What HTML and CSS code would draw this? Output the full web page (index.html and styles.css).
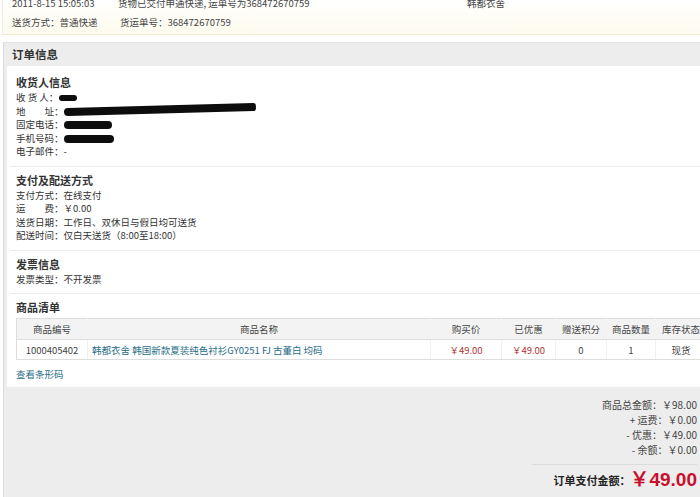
FILE: index.html
```html
<!DOCTYPE html>
<html lang="zh-CN">
<head>
<meta charset="utf-8">
<title>订单信息</title>
<link rel="stylesheet" href="styles.css">
</head>
<body>
<div class="page">
  <div class="track">
    <div class="track-row first">
      <span class="c1">2011-8-15 15:05:03</span>
      <span class="c2">货物已交付申通快递, 运单号为368472670759</span>
      <span class="c3">韩都衣舍</span>
    </div>
    <div class="track-row">
      <span class="c1">送货方式：普通快递</span>
      <span class="c2 shift">货运单号：368472670759</span>
    </div>
  </div>

  <div class="order">
    <div class="order-head">订单信息</div>
    <div class="order-body">
      <div class="section s-first">
        <div class="sec-title">收货人信息</div>
        <div class="rows">
          <div class="row">收 货 人：<span class="blot b-name"></span></div>
          <div class="row">地　　址：<span class="blot b-addr"></span></div>
          <div class="row">固定电话：<span class="blot b-tel"></span></div>
          <div class="row">手机号码：<span class="blot b-mob"></span></div>
          <div class="row">电子邮件：-</div>
        </div>
      </div>
      <div class="section">
        <div class="sec-title">支付及配送方式</div>
        <div class="rows">
          <div class="row">支付方式：在线支付</div>
          <div class="row">运　　费：￥0.00</div>
          <div class="row">送货日期：工作日、双休日与假日均可送货</div>
          <div class="row">配送时间：仅白天送货（8:00至18:00）</div>
        </div>
      </div>
      <div class="section">
        <div class="sec-title">发票信息</div>
        <div class="rows">
          <div class="row">发票类型：不开发票</div>
        </div>
      </div>
      <div class="section s-last">
        <div class="sec-title">商品清单</div>
        <table class="goods">
          <thead>
            <tr>
              <th class="w-id">商品编号</th>
              <th class="w-name">商品名称</th>
              <th class="w-price">购买价</th>
              <th class="w-off">已优惠</th>
              <th class="w-pts">赠送积分</th>
              <th class="w-qty">商品数量</th>
              <th class="w-stock">库存状态</th>
            </tr>
          </thead>
          <tbody>
            <tr>
              <td>1000405402</td>
              <td class="name"><a href="#">韩都衣舍 韩国新款夏装纯色衬衫GY0251 FJ 古董白 均码</a></td>
              <td class="red">￥49.00</td>
              <td class="red">￥49.00</td>
              <td>0</td>
              <td>1</td>
              <td>现货</td>
            </tr>
          </tbody>
        </table>
        <a class="barcode" href="#">查看条形码</a>
      </div>
    </div>

    <div class="summary">
      <div class="sum-lines">
        <div class="sum">商品总金额：￥98.00</div>
        <div class="sum">+ 运费：￥0.00</div>
        <div class="sum">- 优惠：￥49.00</div>
        <div class="sum">- 余额：￥0.00</div>
      </div>
      <div class="total"><span class="t-label">订单支付金额：</span><span class="t-val">￥49.00</span></div>
    </div>
  </div>
</div>
</body>
</html>
```

FILE: styles.css
```css
html, body {
  margin: 0;
  padding: 0;
  background: #ffffff;
  overflow: hidden;
}
body {
  font-family: "Noto Sans CJK SC", "Liberation Sans", sans-serif;
  color: #333;
  font-size: 9.5px;
}
.page {
  width: 712px;
}

/* tracking strip */
.track {
  margin-left: 2px;
  border-left: 1px solid #f1edd6;
  border-bottom: 1px solid #efebcd;
  background: linear-gradient(#ffffff, #fdfbee);
  height: 34px;
  overflow: hidden;
}
.track-row {
  display: grid;
  grid-template-columns: 106px 349px 1fr;
  padding-left: 9px;
  height: 14px;
  line-height: 14px;
  color: #444;
}
.track-row.first {
  margin-top: -4px;
  margin-bottom: 5px;
}
.shift {
  padding-left: 2px;
}

/* order panel */
.order {
  margin-top: 7px;
  margin-left: 3px;
  border-left: 1px solid #dadada;
  border-top: 1px solid #e2e2e2;
  background: #ededed;
  height: 460px;
}
.order-head {
  height: 23px;
  line-height: 22px;
  padding-left: 8px;
  font-size: 11.5px;
  font-weight: bold;
  color: #333;
}
.order-body {
  margin-left: 3px;
  background: #ffffff;
  padding-bottom: 6px;
}
.section {
  margin-left: 3px;
  padding: 5px 0 7px 6px;
  border-bottom: 1px solid #ececec;
}
.section.s-first {
  padding-top: 8px;
}
.section.s-last {
  border-bottom: none;
  padding-bottom: 0;
}
.sec-title {
  line-height: 16px;
  font-size: 11px;
  font-weight: bold;
  color: #333;
}
.rows {
  margin-top: 1px;
}
.row {
  line-height: 13.5px;
  height: 13.5px;
  white-space: nowrap;
}
.blot {
  display: inline-block;
  background: #0d0d0d;
  vertical-align: middle;
  border-radius: 5px;
}
.b-name { width: 18px; height: 6px; margin-left: 1px; }
.b-addr { width: 192px; height: 8px; transform: rotate(-1.5deg); transform-origin: left center; border-radius: 6px 4px 4px 6px; }
.b-tel { width: 48px; height: 8px; }
.b-mob { width: 50px; height: 8px; }

/* goods table */
.goods {
  margin-top: 3px;
  border-collapse: collapse;
  width: 683px;
  table-layout: fixed;
  font-size: 9.5px;
}
.goods th, .goods td {
  border: 1px solid #dddddd;
  text-align: center;
  padding: 0;
  white-space: nowrap;
}
.goods th {
  height: 20px;
  background: #f3f3f3;
  font-weight: normal;
  color: #444;
  border-left-color: #f3f3f3;
  border-right-color: #f3f3f3;
}
.goods th:first-child { border-left-color: #dddddd; }
.goods td {
  height: 19px;
  color: #444;
  border-left-color: #f0f0f0;
  border-right-color: #f0f0f0;
}
.goods td:first-child { border-left-color: #dddddd; }
.w-id { width: 70px; }
.w-name { width: 342px; }
.w-price { width: 70px; }
.w-off { width: 53px; }
.w-pts { width: 50px; }
.w-qty { width: 48px; }
.w-stock { width: 50px; }
.goods td.name {
  text-align: left;
  padding-left: 4px;
}
.goods a, .barcode {
  color: #1f6d88;
  text-decoration: none;
}
.goods td.red {
  color: #b03434;
}
.barcode {
  display: block;
  margin-top: 7px;
  line-height: 14px;
  width: max-content;
}

/* summary */
.summary {
  padding: 10px 15px 0 0;
  text-align: right;
}
.sum {
  line-height: 15px;
  font-size: 10px;
  color: #444;
}
.total {
  margin: 7px 0 0 auto;
  width: 165px;
  border-top: 1px solid #dcdcdc;
  height: 30px;
  line-height: 30px;
  white-space: nowrap;
}
.t-label {
  font-size: 11px;
  font-weight: bold;
  color: #222;
}
.t-val {
  font-family: "Liberation Sans", Arial, sans-serif;
  font-size: 19px;
  font-weight: bold;
  color: #c8102e;
  vertical-align: -1px;
}
```
